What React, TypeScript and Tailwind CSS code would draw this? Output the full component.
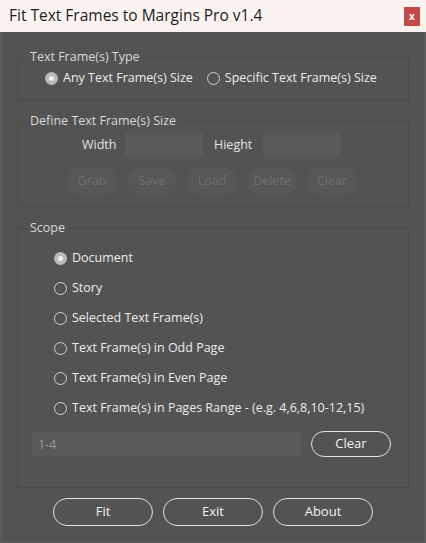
import { useState } from 'react';

const font = { fontFamily: '"Open Sans", "Noto Sans", sans-serif' };

function Radio({ checked, label, onClick }: { checked: boolean; label: string; onClick: () => void }) {
  return (
    <button onClick={onClick} className="flex items-center gap-[5px] text-[12.5px] text-[#ececec] leading-[16px]">
      {checked ? (
        <span className="w-[13px] h-[13px] rounded-full bg-[#b9b9b9] flex items-center justify-center">
          <span className="w-[5px] h-[5px] rounded-full bg-[#f0f0f0]" />
        </span>
      ) : (
        <span className="w-[13px] h-[13px] rounded-full border border-[#d4d4d4]" />
      )}
      <span>{label}</span>
    </button>
  );
}

const SCOPES = [
  'Document',
  'Story',
  'Selected Text Frame(s)',
  'Text Frame(s) in Odd Page',
  'Text Frame(s) in Even Page',
  'Text Frame(s) in Pages Range - (e.g. 4,6,8,10-12,15)',
];

export default function App() {
  const [frameType, setFrameType] = useState<'any' | 'specific'>('any');
  const [scope, setScope] = useState(0);
  const [range, setRange] = useState('1-4');

  return (
    <div style={font} className="w-[426px] h-[543px] bg-[#535353] flex flex-col overflow-hidden">
      {/* title bar */}
      <div className="h-[32px] bg-[#fbf3f0] flex items-center justify-between pl-[9px] pr-[6px] shrink-0">
        <span className="text-[15.5px] text-[#1c1c1c]">Fit Text Frames to Margins Pro v1.4</span>
        <button className="w-[16px] h-[19px] bg-[#c44848] text-white text-[10px] font-bold leading-none flex items-center justify-center">
          x
        </button>
      </div>

      <div className="flex-1 flex flex-col px-[17px] pt-[17px] border-x-2 border-b-2 border-[#5c5c5c]">
        {/* frame type */}
        <fieldset className="border border-[#4a4a4a] pt-[5px] pb-[14px] mx-[-2px]">
          <legend className="ml-[9px] px-[3px] text-[12.5px] leading-[16px] text-[#d8d8d8]">Text Frame(s) Type</legend>
          <div className="flex items-center gap-[14px] pl-[27px]">
            <Radio checked={frameType === 'any'} label="Any Text Frame(s) Size" onClick={() => setFrameType('any')} />
            <Radio checked={frameType === 'specific'} label="Specific Text Frame(s) Size" onClick={() => setFrameType('specific')} />
          </div>
        </fieldset>

        {/* frame size */}
        <fieldset className="border border-[#4a4a4a] mt-[12px] pt-[4px] pb-[11px] mx-[-2px]">
          <legend className="ml-[9px] px-[3px] text-[12.5px] leading-[16px] text-[#d8d8d8]">Define Text Frame(s) Size</legend>
          <div className="flex items-center pl-[64px] text-[12.5px] text-[#e4e4e4]">
            <span className="w-[43px]">Width</span>
            <input className="w-[78px] h-[24px] bg-[#595959] outline-none" />
            <span className="ml-[11px] w-[49px]">Hieght</span>
            <input className="w-[78px] h-[24px] bg-[#595959] outline-none" />
          </div>
          <div className="flex items-center gap-[10px] pl-[49px] mt-[10px]">
            {['Grab', 'Save', 'Load', 'Delete', 'Clear'].map(b => (
              <button key={b} className="w-[50px] h-[28px] rounded-full bg-[#575757] text-[12.5px] text-[#707070]">
                {b}
              </button>
            ))}
          </div>
        </fieldset>

        {/* scope */}
        <fieldset className="border border-[#4a4a4a] mt-[13px] pt-[7px] pb-[30px] mx-[-2px]">
          <legend className="ml-[9px] px-[3px] text-[12.5px] leading-[16px] text-[#d8d8d8]">Scope</legend>
          <div className="flex flex-col pl-[36px]">
            {SCOPES.map((s, i) => (
              <div key={s} className="h-[30px] flex items-center">
                <Radio checked={scope === i} label={s} onClick={() => setScope(i)} />
              </div>
            ))}
          </div>
          <div className="flex items-center mt-[8px] pl-[14px]">
            <input
              value={range}
              onChange={e => setRange(e.target.value)}
              className="w-[269px] h-[24px] bg-[#595959] px-[6px] text-[12.5px] text-[#9a9a9a] outline-none"
            />
            <button
              onClick={() => setRange('')}
              className="ml-[10px] w-[80px] h-[26px] rounded-full border-[1.5px] border-[#e2e2e2] text-[13px] text-[#f2f2f2]"
            >
              Clear
            </button>
          </div>
        </fieldset>

        {/* actions */}
        <div className="flex justify-center gap-[10px] mt-[10px]">
          {['Fit', 'Exit', 'About'].map(b => (
            <button key={b} className="w-[100px] h-[28px] rounded-full border-[1.5px] border-[#e2e2e2] text-[13px] text-[#f2f2f2]">
              {b}
            </button>
          ))}
        </div>
      </div>
    </div>
  );
}
